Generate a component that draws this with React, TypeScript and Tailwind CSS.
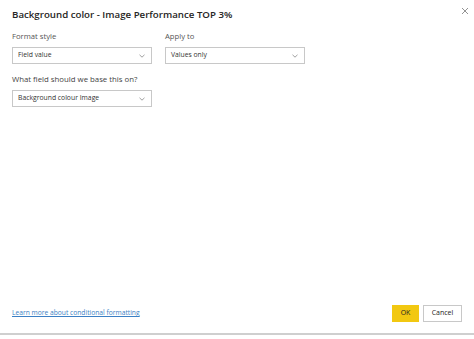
import React from "react";

function Chevron() {
  return (
    <svg width="6" height="4" viewBox="0 0 6 4" className="shrink-0">
      <path d="M0.5 0.8 L3 3.2 L5.5 0.8" fill="none" stroke="#777" strokeWidth="0.7" />
    </svg>
  );
}

function Select({ value, className = "" }: { value: string; className?: string }) {
  return (
    <div
      className={`flex h-[17px] w-[140px] items-center justify-between border border-[#c8c8c8] bg-white pl-[5px] pr-[6px] text-[6.8px] text-[#333] ${className}`}
    >
      <span>{value}</span>
      <Chevron />
    </div>
  );
}

export default function App() {
  return (
    <div
      className="relative flex h-[339px] w-[474px] flex-col bg-white"
      style={{ fontFamily: '"Open Sans", "Noto Sans", sans-serif' }}
    >
      <div className="flex flex-1 flex-col">
        <div className="flex items-start justify-between pl-[12px] pr-[4px] pt-[7px]">
          <div className="text-[9.7px] font-semibold leading-[16px] text-[#252423]">
            Background color - Image Performance TOP 3%
          </div>
          <svg width="8" height="8" viewBox="0 0 8 8" className="mt-[0px] mr-[1px]">
            <path d="M1 1 L7 7 M7 1 L1 7" stroke="#777" strokeWidth="0.8" />
          </svg>
        </div>

        <div className="mt-[7px] flex gap-[13px] pl-[12px]">
          <div className="flex flex-col">
            <div className="text-[7.7px] leading-[12px] text-[#555]">Format style</div>
            <Select value="Field value" className="mt-[5px]" />
          </div>
          <div className="flex flex-col">
            <div className="text-[7.7px] leading-[12px] text-[#555]">Apply to</div>
            <Select value="Values only" className="mt-[5px]" />
          </div>
        </div>

        <div className="mt-[9px] flex flex-col pl-[12px]">
          <div className="text-[7.8px] leading-[12px] text-[#444]">What field should we base this on?</div>
          <Select value="Background colour Image" className="mt-[5px]" />
        </div>
      </div>

      <div className="flex items-center justify-between pb-[11px] pl-[12px] pr-[12px]">
        <a className="text-[6.7px] text-[#3b7fc4] underline" href="#">
          Learn more about conditional formatting
        </a>
        <div className="flex gap-[4px]">
          <div className="flex h-[17px] w-[27px] items-center justify-center bg-[#f2c811] text-[7px] text-[#252423]">
            OK
          </div>
          <div className="flex h-[17px] w-[39px] items-center justify-center border border-[#c8c8c8] bg-white text-[7px] text-[#252423]">
            Cancel
          </div>
        </div>
      </div>
      <div className="h-[2px] w-full bg-[#cfcfcf]" />
      <div className="h-[4px] w-full bg-white" />
    </div>
  );
}
